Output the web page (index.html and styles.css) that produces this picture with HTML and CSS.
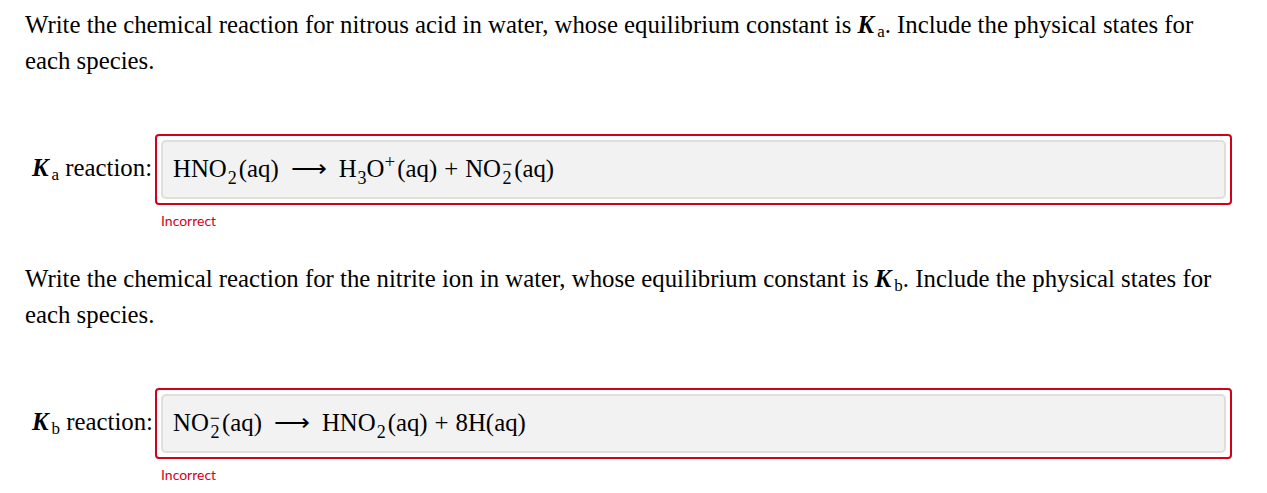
FILE: index.html
```html
<!DOCTYPE html>
<html>
<head>
<meta charset="utf-8">
<link rel="stylesheet" href="styles.css">
</head>
<body>
<div class="page">
  <p class="question">Write the chemical reaction for nitrous acid in water, whose equilibrium constant is <span class="k">K</span><sub class="ks">a</sub>. Include the physical states for each species.</p>
  <div class="row">
    <div class="label"><span class="k">K</span><sub class="ks">a</sub> reaction:</div>
    <div class="field">
      <div class="box">
        <div class="inner">HNO<sub class="s">2</sub><span class="st">(aq)</span><span class="arrow">⟶</span>H<sub class="s">3</sub>O<sup class="p">+</sup><span class="st">(aq)</span><span class="op">+</span>NO<span class="ion"><span class="ion-c">−</span><span class="ion-n">2</span></span><span class="st">(aq)</span></div>
      </div>
      <div class="err">Incorrect</div>
    </div>
  </div>
  <p class="question q2">Write the chemical reaction for the nitrite ion in water, whose equilibrium constant is <span class="k">K</span><sub class="ks">b</sub>. Include the physical states for each species.</p>
  <div class="row">
    <div class="label"><span class="k">K</span><sub class="ks">b</sub> reaction:</div>
    <div class="field">
      <div class="box">
        <div class="inner">NO<span class="ion"><span class="ion-c">−</span><span class="ion-n">2</span></span><span class="st">(aq)</span><span class="arrow">⟶</span>HNO<sub class="s">2</sub><span class="st">(aq)</span><span class="op">+</span>8H(aq)</div>
      </div>
      <div class="err">Incorrect</div>
    </div>
  </div>
</div>
</body>
</html>
```

FILE: styles.css
```css
html, body {
  margin: 0;
  padding: 0;
  background: #fff;
}
body {
  font-family: "Liberation Serif", "Times New Roman", serif;
  font-size: 24.8px;
  color: #000;
}
.page {
  padding: 7px 0 0 25px;
}
.question {
  margin: 0;
  line-height: 36px;
  max-width: 1200px;
}
.q2 {
  margin-top: 32px;
}
.k {
  font-weight: bold;
  font-style: italic;
}
.ks {
  font-size: 17px;
  vertical-align: -4px;
  line-height: 0;
  margin-left: 3px;
}
.row {
  display: flex;
  align-items: flex-start;
  margin-top: 55px;
  margin-left: 7px;
}
.label {
  flex: 0 0 123px;
  line-height: 67px;
  white-space: nowrap;
}
.field {
  flex: 0 0 auto;
  display: flex;
  flex-direction: column;
}
.box {
  width: 1077px;
  height: 71px;
  border: 2px solid #d0021b;
  border-radius: 4px;
  padding: 4px;
  box-sizing: border-box;
}
.inner {
  height: 100%;
  box-sizing: border-box;
  background: #f2f2f2;
  border: 2px solid #dedede;
  border-radius: 5px;
  padding-left: 10px;
  line-height: 53px;
  white-space: nowrap;
}
.s {
  font-size: 18px;
  vertical-align: -7px;
  line-height: 0;
  margin-left: 1px;
}
.p {
  font-size: 19px;
  vertical-align: 9px;
  line-height: 0;
}
.st {
  margin-left: 2px;
}
.ion {
  display: inline-block;
  vertical-align: -7px;
  font-size: 18px;
  line-height: 14px;
  text-align: center;
  margin-left: 1px;
}
.ion-c, .ion-n {
  display: block;
}
.arrow {
  display: inline-block;
  margin: 0 12px;
}
.op {
  display: inline-block;
  margin: 0 7px;
}
.err {
  font-family: "Lato", "Open Sans", sans-serif;
  font-size: 14px;
  color: #d0021b;
  margin-top: 7px;
  margin-left: 6px;
  line-height: 17px;
}
```
